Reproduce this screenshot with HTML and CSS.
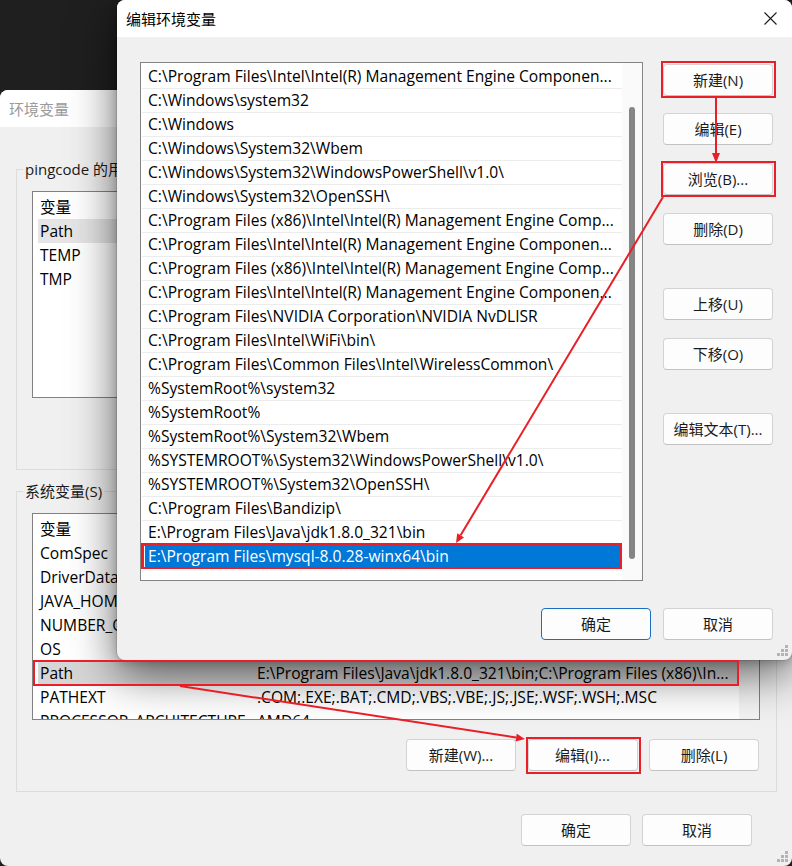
FILE: index.html
```html
<!DOCTYPE html>
<html lang="zh-CN">
<head>
<meta charset="utf-8">
<title>编辑环境变量</title>
<link rel="stylesheet" href="styles.css">
</head>
<body>
<div class="win win-back">
  <div class="titlebar inactive"><span class="title">环境变量</span></div>
  <div class="back-body">
    <fieldset class="group">
      <legend>pingcode 的用户变量(U)</legend>
      <div class="gbody">
        <div class="vlist">
          <div class="vrows">
            <div class="vrow head"><span class="c1">变量</span><span class="c2"></span></div>
            <div class="vrow hl-light"><span class="c1">Path</span><span class="c2"></span></div>
            <div class="vrow"><span class="c1">TEMP</span><span class="c2"></span></div>
            <div class="vrow"><span class="c1">TMP</span><span class="c2"></span></div>
          </div>
        </div>
        <div class="btnrow">
          <div class="btn"></div>
          <div class="btn"></div>
          <div class="btn"></div>
        </div>
      </div>
    </fieldset>
    <fieldset class="group group2">
      <legend>系统变量(S)</legend>
      <div class="gbody">
        <div class="vlist">
          <div class="vrows">
            <div class="vrow head"><span class="c1">变量</span><span class="c2"></span></div>
            <div class="vrow"><span class="c1">ComSpec</span><span class="c2"></span></div>
            <div class="vrow"><span class="c1">DriverData</span><span class="c2"></span></div>
            <div class="vrow"><span class="c1">JAVA_HOME</span><span class="c2"></span></div>
            <div class="vrow"><span class="c1">NUMBER_OF_PROCESSORS</span><span class="c2"></span></div>
            <div class="vrow"><span class="c1">OS</span><span class="c2"></span></div>
            <div class="vrow hl-gray"><span class="c1">Path</span><span class="c2">E:\Program Files\Java\jdk1.8.0_321\bin;C:\Program Files (x86)\In...</span></div>
            <div class="vrow"><span class="c1">PATHEXT</span><span class="c2">.COM;.EXE;.BAT;.CMD;.VBS;.VBE;.JS;.JSE;.WSF;.WSH;.MSC</span></div>
            <div class="vrow"><span class="c1">PROCESSOR_ARCHITECTURE</span><span class="c2">AMD64</span></div>
          </div>
          <div class="vscroll"></div>
        </div>
        <div class="btnrow">
          <div class="btn">新建(W)...</div>
          <div class="btn">编辑(I)...</div>
          <div class="btn">删除(L)</div>
        </div>
      </div>
    </fieldset>
    <div class="footer back-footer">
      <div class="btn">确定</div>
      <div class="btn">取消</div>
    </div>
  </div>
  <svg class="grip" width="12" height="12" viewBox="0 0 12 12"><g fill="#b4b4b4"><rect x="8" y="0" width="3" height="3"/><rect x="4" y="4" width="3" height="3"/><rect x="8" y="4" width="3" height="3"/><rect x="0" y="8" width="3" height="3"/><rect x="4" y="8" width="3" height="3"/><rect x="8" y="8" width="3" height="3"/></g></svg>
</div>

<div class="win win-front">
  <div class="titlebar">
    <span class="title">编辑环境变量</span>
    <svg class="close" width="13" height="13" viewBox="0 0 13 13"><path d="M0.5 0.5 L12.5 12.5 M12.5 0.5 L0.5 12.5" stroke="#1a1a1a" stroke-width="1.1" fill="none"/></svg>
  </div>
  <div class="front-body">
    <div class="front-main">
      <div class="plist">
        <div class="prows">
          <div class="prow">C:\Program Files\Intel\Intel(R) Management Engine Componen...</div>
          <div class="prow">C:\Windows\system32</div>
          <div class="prow">C:\Windows</div>
          <div class="prow">C:\Windows\System32\Wbem</div>
          <div class="prow">C:\Windows\System32\WindowsPowerShell\v1.0\</div>
          <div class="prow">C:\Windows\System32\OpenSSH\</div>
          <div class="prow">C:\Program Files (x86)\Intel\Intel(R) Management Engine Comp...</div>
          <div class="prow">C:\Program Files\Intel\Intel(R) Management Engine Componen...</div>
          <div class="prow">C:\Program Files (x86)\Intel\Intel(R) Management Engine Comp...</div>
          <div class="prow">C:\Program Files\Intel\Intel(R) Management Engine Componen...</div>
          <div class="prow">C:\Program Files\NVIDIA Corporation\NVIDIA NvDLISR</div>
          <div class="prow">C:\Program Files\Intel\WiFi\bin\</div>
          <div class="prow">C:\Program Files\Common Files\Intel\WirelessCommon\</div>
          <div class="prow">%SystemRoot%\system32</div>
          <div class="prow">%SystemRoot%</div>
          <div class="prow">%SystemRoot%\System32\Wbem</div>
          <div class="prow">%SYSTEMROOT%\System32\WindowsPowerShell\v1.0\</div>
          <div class="prow">%SYSTEMROOT%\System32\OpenSSH\</div>
          <div class="prow">C:\Program Files\Bandizip\</div>
          <div class="prow">E:\Program Files\Java\jdk1.8.0_321\bin</div>
          <div class="prow sel">E:\Program Files\mysql-8.0.28-winx64\bin</div>
        </div>
        <div class="ptrack"><div class="pthumb"></div></div>
      </div>
      <div class="sidebtns">
        <div class="btn">新建(N)</div>
        <div class="btn">编辑(E)</div>
        <div class="btn">浏览(B)...</div>
        <div class="btn">删除(D)</div>
        <div class="btn sep">上移(U)</div>
        <div class="btn">下移(O)</div>
        <div class="btn sep">编辑文本(T)...</div>
      </div>
    </div>
    <div class="footer front-footer">
      <div class="btn default">确定</div>
      <div class="btn">取消</div>
    </div>
  </div>
  <svg class="grip" width="12" height="12" viewBox="0 0 12 12"><g fill="#b4b4b4"><rect x="8" y="0" width="3" height="3"/><rect x="4" y="4" width="3" height="3"/><rect x="8" y="4" width="3" height="3"/><rect x="0" y="8" width="3" height="3"/><rect x="4" y="8" width="3" height="3"/><rect x="8" y="8" width="3" height="3"/></g></svg>
</div>

<svg class="annot" width="792" height="866" viewBox="0 0 792 866">
  <g fill="none" stroke="#e81e28" stroke-width="2">
    <rect x="662" y="62" width="113" height="35"/>
    <rect x="662" y="162" width="113" height="34"/>
    <rect x="142" y="544" width="479" height="24"/>
    <rect x="34" y="661" width="704" height="24"/>
    <rect x="527" y="738" width="113" height="35"/>
    <line x1="716" y1="97" x2="716" y2="155"/>
    <line x1="663" y1="197" x2="460.6" y2="535.3"/>
    <line x1="180" y1="686" x2="516" y2="737.5"/>
  </g>
  <g fill="#e81e28">
    <polygon points="716,163 712,153 720,153"/>
    <polygon points="456,543 464,537.4 457.2,533.3"/>
    <polygon points="525,739 515.5,741.5 516.7,733.7"/>
  </g>
</svg>
</body>
</html>
```
FILE: styles.css
```css
* { box-sizing: border-box; }
html, body { margin: 0; padding: 0; }
body {
  width: 792px;
  height: 866px;
  position: relative;
  overflow: hidden;
  background: #1f1f1f;
  font-family: "Open Sans", "Noto Sans CJK SC", sans-serif;
  font-size: 15px;
  color: #000;
}
.win {
  position: absolute;
  background: #f0f0f0;
  border-radius: 8px;
  overflow: hidden;
  display: flex;
  flex-direction: column;
}
.win-back { left: 0; top: 90px; width: 792px; height: 776px; }
.win-front {
  left: 117px; top: 0; width: 675px; height: 660px;
  box-shadow: 0 14px 46px rgba(0,0,0,0.62), 0 2px 10px rgba(0,0,0,0.18), 0 0 0 1px rgba(0,0,0,0.10);
}
.titlebar {
  flex: none;
  height: 37px;
  background: #fff;
  display: flex;
  align-items: center;
  justify-content: space-between;
  padding-left: 9px;
  line-height: 20px;
}
.titlebar.inactive .title { color: #9a9a9a; }
.close { margin-right: 15px; }

.btn {
  width: 110px;
  height: 32px;
  background: #fdfdfd;
  border: 1px solid #d3d3d3;
  border-bottom-color: #c2c2c2;
  border-radius: 4px;
  display: flex;
  align-items: center;
  justify-content: center;
  color: #1a1a1a;
  line-height: 20px;
  flex: none;
}
.btn.default { border-color: #1a6fc4; }

/* back dialog */
.back-body { padding: 32px 15px 0 16px; }
.group {
  margin: 0;
  padding: 0;
  border: 1px solid #dcdcdc;
  min-width: 0;
}
.group legend {
  margin-left: 6px;
  padding: 0 2px;
  line-height: 20px;
  color: #1a1a1a;
}
.group2 { margin-top: 11px; }
.gbody { padding: 12px 16px 20px 15px; }
.vlist {
  height: 207px;
  background: #fff;
  border: 1px solid #828282;
  display: flex;
  overflow: hidden;
  font-size: 15.6px;
}
.vrows { flex: 1; min-width: 0; padding: 3px 0 0 5px; overflow: hidden; }
.vrow {
  height: 24px;
  display: grid;
  grid-template-columns: 217px 1fr;
  align-items: center;
  white-space: nowrap;
  line-height: 24px;
}
.vrow span { padding-left: 2px; overflow: hidden; }
.hl-light { background: #e5e5e5; }
.hl-gray { background: #d6d6d6; }
.vscroll { width: 20px; flex: none; background: #f3f3f3; }
.btnrow {
  margin-top: 19px;
  margin-right: 1px;
  display: flex;
  justify-content: flex-end;
  gap: 11.5px;
}
.footer { display: flex; justify-content: flex-end; }
.back-footer { margin-top: 22px; padding-right: 25px; gap: 11px; }

/* front dialog */
.front-body { padding: 25px 19px 0 23px; }
.front-main { display: flex; gap: 20px; }
.plist {
  width: 503px;
  height: 519px;
  background: #fff;
  border: 1px solid #848484;
  display: flex;
  overflow: hidden;
  font-size: 15.6px;
}
.prows { flex: 1; min-width: 0; padding: 2px 0 0 1px; }
.prow {
  height: 24px;
  line-height: 23px;
  border-bottom: 1px solid #ececec;
  padding-left: 6px;
  white-space: nowrap;
  overflow: hidden;
  position: relative;
}
.prow.sel { background: #0078d7; color: #fff; border-bottom-color: #0078d7; }
.prow.sel::before {
  content: "";
  position: absolute;
  left: 2px; top: 1px; bottom: 1px;
  width: 1px;
  background: #fff;
}
.ptrack { width: 20px; flex: none; background: #fafafa; padding: 44px 0 0 7px; }
.pthumb { width: 6px; height: 452px; background: #858585; border-radius: 3px; }
.sidebtns { display: flex; flex-direction: column; gap: 18px; padding-top: 2px; }
.sidebtns .btn:nth-child(2) { margin-top: -1px; }
.sidebtns .sep { margin-top: 25px; }
.front-footer { margin-top: 27px; gap: 12px; }

.grip { position: absolute; right: 3px; bottom: 3px; }
.annot { position: absolute; left: 0; top: 0; pointer-events: none; }
```
